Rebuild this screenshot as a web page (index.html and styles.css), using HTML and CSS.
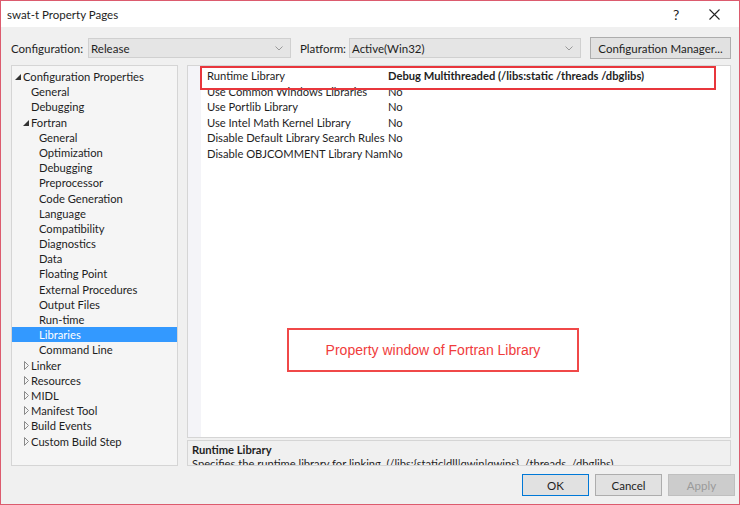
FILE: index.html
```html
<!DOCTYPE html>
<html lang="en">
<head>
<meta charset="UTF-8">
<title>swat-t Property Pages</title>
<link rel="stylesheet" href="styles.css">
</head>
<body>

<div class="window">
    <!-- Title bar -->
    <div class="titlebar">
        <span class="title">swat-t Property Pages</span>
        <span class="help">?</span>
        <span class="close">
            <svg width="11" height="11" viewBox="0 0 11 11"><path d="M0.5 0.5 L10.5 10.5 M10.5 0.5 L0.5 10.5" stroke="#222" stroke-width="1.1" fill="none"/></svg>
        </span>
    </div>

    <!-- Configuration / platform row -->
    <div class="config-row">
        <label class="lbl lbl-config">Configuration:</label>
        <div class="combo combo-config">
            <span>Release</span>
            <svg class="chev" width="8" height="5" viewBox="0 0 8 5"><path d="M0.5 0.5 L4 4 L7.5 0.5" stroke="#999" fill="none"/></svg>
        </div>
        <label class="lbl lbl-platform">Platform:</label>
        <div class="combo combo-platform">
            <span>Active(Win32)</span>
            <svg class="chev" width="8" height="5" viewBox="0 0 8 5"><path d="M0.5 0.5 L4 4 L7.5 0.5" stroke="#999" fill="none"/></svg>
        </div>
        <button class="btn btn-manager">Configuration Manager...</button>
    </div>

    <div class="main">
        <!-- Tree -->
        <ul class="tree">
            <li class="lv0"><svg class="arrow" width="6" height="6" viewBox="0 0 6 6"><path d="M6 0 L6 6 L0 6Z" fill="#333"/></svg>Configuration Properties</li>
            <li class="lv1">General</li>
            <li class="lv1">Debugging</li>
            <li class="lv1"><svg class="arrow" width="6" height="6" viewBox="0 0 6 6"><path d="M6 0 L6 6 L0 6Z" fill="#333"/></svg>Fortran</li>
            <li class="lv2">General</li>
            <li class="lv2">Optimization</li>
            <li class="lv2">Debugging</li>
            <li class="lv2">Preprocessor</li>
            <li class="lv2">Code Generation</li>
            <li class="lv2">Language</li>
            <li class="lv2">Compatibility</li>
            <li class="lv2">Diagnostics</li>
            <li class="lv2">Data</li>
            <li class="lv2">Floating Point</li>
            <li class="lv2">External Procedures</li>
            <li class="lv2">Output Files</li>
            <li class="lv2">Run-time</li>
            <li class="lv2 selected">Libraries</li>
            <li class="lv2">Command Line</li>
            <li class="lv1"><svg class="arrow closed" width="5" height="9" viewBox="0 0 5 9"><path d="M0.5 0.5 L4.5 4.5 L0.5 8.5Z" fill="none" stroke="#8a8a8a"/></svg>Linker</li>
            <li class="lv1"><svg class="arrow closed" width="5" height="9" viewBox="0 0 5 9"><path d="M0.5 0.5 L4.5 4.5 L0.5 8.5Z" fill="none" stroke="#8a8a8a"/></svg>Resources</li>
            <li class="lv1"><svg class="arrow closed" width="5" height="9" viewBox="0 0 5 9"><path d="M0.5 0.5 L4.5 4.5 L0.5 8.5Z" fill="none" stroke="#8a8a8a"/></svg>MIDL</li>
            <li class="lv1"><svg class="arrow closed" width="5" height="9" viewBox="0 0 5 9"><path d="M0.5 0.5 L4.5 4.5 L0.5 8.5Z" fill="none" stroke="#8a8a8a"/></svg>Manifest Tool</li>
            <li class="lv1"><svg class="arrow closed" width="5" height="9" viewBox="0 0 5 9"><path d="M0.5 0.5 L4.5 4.5 L0.5 8.5Z" fill="none" stroke="#8a8a8a"/></svg>Build Events</li>
            <li class="lv1"><svg class="arrow closed" width="5" height="9" viewBox="0 0 5 9"><path d="M0.5 0.5 L4.5 4.5 L0.5 8.5Z" fill="none" stroke="#8a8a8a"/></svg>Custom Build Step</li>
        </ul>

        <div class="right">
            <!-- Property grid -->
            <div class="grid">
                <div class="strip"></div>
                <div class="rows">
                    <div class="row highlight">
                        <span class="name">Runtime Library</span>
                        <span class="value bold">Debug Multithreaded (/libs:static /threads /dbglibs)</span>
                    </div>
                    <div class="row"><span class="name">Use Common Windows Libraries</span><span class="value">No</span></div>
                    <div class="row"><span class="name">Use Portlib Library</span><span class="value">No</span></div>
                    <div class="row"><span class="name">Use Intel Math Kernel Library</span><span class="value">No</span></div>
                    <div class="row"><span class="name">Disable Default Library Search Rules</span><span class="value">No</span></div>
                    <div class="row"><span class="name">Disable OBJCOMMENT Library Name:</span><span class="value">No</span></div>
                </div>
                <div class="note">Property window of Fortran Library</div>
            </div>

            <!-- Description -->
            <div class="desc">
                <div class="desc-title">Runtime Library</div>
                <div class="desc-text">Specifies the runtime library for linking. (/libs:{static|dll|qwin|qwins}, /threads, /dbglibs)</div>
            </div>
        </div>
    </div>

    <!-- Dialog buttons -->
    <div class="footer">
        <button class="btn btn-ok">OK</button>
        <button class="btn">Cancel</button>
        <button class="btn btn-disabled">Apply</button>
    </div>
</div>

</body>
</html>
```

FILE: styles.css
```css
/* Reset */
* {
    box-sizing: border-box;
    margin: 0;
    padding: 0;
}

body {
    width: 740px;
    height: 505px;
    overflow: hidden;
    font-family: 'Lato', 'Noto Sans', sans-serif;
    font-size: 11.2px;
    color: #1e1e1e;
    background: #fff;
}

.window {
    width: 740px;
    height: 505px;
    border: 1px solid #dc5b6e;
    background: #f0f0f0;
    display: flex;
    flex-direction: column;
}

/* Title bar */
.titlebar {
    height: 26px;
    background: #fff;
    display: flex;
    align-items: center;
    padding: 0 0 0 6px;
    font-size: 11.5px;
}

.titlebar .title {
    flex: 1;
}

.titlebar .help {
    width: 36px;
    font-size: 14px;
    color: #222;
}

.titlebar .close {
    width: 30px;
    display: flex;
}

/* Configuration row */
.config-row {
    display: flex;
    align-items: center;
    height: 22px;
    margin-top: 10px;
    padding: 0 8px 0 10px;
}

.lbl {
    font-size: 11.5px;
}

.lbl-config {
    width: 77px;
}

.lbl-platform {
    width: 49px;
    margin-left: 9px;
}

.combo {
    height: 20px;
    background: #e5e5e5;
    border: 1px solid #d0d0d0;
    display: flex;
    align-items: center;
    justify-content: space-between;
    padding: 0 7px 0 2px;
    font-size: 11.5px;
}

.combo-config {
    width: 203px;
}

.combo-platform {
    width: 232px;
}

.btn {
    height: 22px;
    width: 67px;
    font-family: inherit;
    font-size: 11.5px;
    color: #1e1e1e;
    background: #e1e1e1;
    border: 1px solid #adadad;
}

.btn-manager {
    width: 141px;
    margin-left: auto;
}

/* Main area */
.main {
    display: flex;
    margin-top: 6px;
    padding: 0 8px 0 10px;
    gap: 9px;
    height: 401px;
}

/* Tree */
.tree {
    list-style: none;
    width: 167px;
    background: #f5f5f5;
    border: 1px solid #d5d5d5;
    padding-top: 3px;
}

.tree li {
    height: 15.2px;
    line-height: 15px;
    white-space: nowrap;
    position: relative;
}

.tree .lv0 { padding-left: 11px; }
.tree .lv1 { padding-left: 19px; }
.tree .lv2 { padding-left: 27px; }

.tree .selected {
    background: #3399ff;
    color: #fff;
}

.arrow {
    position: absolute;
    top: 5px;
}

.lv0 .arrow { left: 3px; }
.lv1 .arrow { left: 11px; }

.arrow.closed {
    top: 3px;
    left: 12px;
}

/* Right column */
.right {
    flex: 1;
    display: flex;
    flex-direction: column;
    gap: 2px;
}

.grid {
    height: 373px;
    background: #fff;
    border: 1px solid #d5d5d5;
    display: flex;
    position: relative;
}

.strip {
    width: 13px;
    background: #f4f4f8;
}

.rows {
    flex: 1;
    padding-top: 2px;
}

.row {
    display: flex;
    height: 15.6px;
    line-height: 15px;
    white-space: nowrap;
}

.row .name {
    width: 187px;
    padding-left: 6px;
    overflow: hidden;
}

.row .value.bold {
    font-weight: bold;
}

.row.highlight {
    position: relative;
}

.row.highlight::before {
    content: "";
    position: absolute;
    left: -1px;
    top: -2px;
    width: 512px;
    height: 20px;
    border: 2px solid #e8363c;
}

/* Annotation */
.note {
    position: absolute;
    left: 99px;
    top: 262px;
    width: 292px;
    height: 44px;
    border: 2px solid #f04848;
    background: #fff;
    color: #f03c3c;
    font-family: 'Liberation Sans', Arial, sans-serif;
    font-size: 14px;
    display: flex;
    align-items: center;
    justify-content: center;
}

/* Description */
.desc {
    height: 26px;
    border: 1px solid #d5d5d5;
    background: #f0f0f0;
    overflow: hidden;
    padding: 2px 4px 0;
}

.desc-title {
    font-weight: bold;
    line-height: 14px;
}

.desc-text {
    line-height: 14px;
    white-space: nowrap;
}

/* Footer */
.footer {
    display: flex;
    justify-content: flex-end;
    gap: 6px;
    margin-top: 8px;
    padding-right: 4px;
}

.btn-ok {
    border-color: #0078d7;
}

.btn-disabled {
    background: #cccccc;
    border-color: #bfbfbf;
    color: #9a9a9a;
}
```
